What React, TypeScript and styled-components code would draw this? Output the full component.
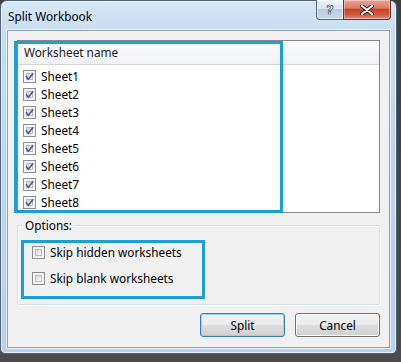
import React from "react";
import styled, { createGlobalStyle } from "styled-components";

const GlobalStyle = createGlobalStyle`
  *, *::before, *::after { box-sizing: border-box; }
  html, body { margin: 0; padding: 0; background: #4a4a4a; }
  body {
    font-family: "Noto Sans", "Open Sans", sans-serif;
    font-size: 11.8px;
    color: #000;
  }
`;

const sheets = ["Sheet1", "Sheet2", "Sheet3", "Sheet4", "Sheet5", "Sheet6", "Sheet7", "Sheet8"];

const options = ["Skip hidden worksheets", "Skip blank worksheets"];

const CheckBox = ({ checked }: { checked?: boolean }) => (
  <Box>
    <BoxFill />
    {checked && (
      <CheckMark viewBox="0 0 13 13">
        <path d="M3 6.2 L5.4 9.2 L10.2 3.2" fill="none" stroke="#4a5f8f" strokeWidth="1.7" />
      </CheckMark>
    )}
  </Box>
);

const App = () => {
  return (
    <Page>
      <GlobalStyle />
      <Window>
        <TitleBar>
          <Title>Split Workbook</Title>
          <Caption>
            <HelpButton>?</HelpButton>
            <CloseButton>
              <svg width="14" height="10" viewBox="0 0 14 10">
                <path d="M2 1 L12 9 M12 1 L2 9" stroke="#3b1a14" strokeWidth="4" strokeLinecap="round" />
                <path d="M2 1 L12 9 M12 1 L2 9" stroke="#ffffff" strokeWidth="2.2" strokeLinecap="round" />
              </svg>
            </CloseButton>
          </Caption>
        </TitleBar>
        <Client>
          <ListBox>
            <ListHeader>Worksheet name</ListHeader>
            <Rows>
              {sheets.map((s) => (
                <Row key={s}>
                  <CheckBox checked />
                  <span>{s}</span>
                </Row>
              ))}
            </Rows>
            <Highlight $left={-4} $top={0} $width={269} $height={172} />
          </ListBox>
          <Group>
            <GroupLabel>Options:</GroupLabel>
            <OptionList>
              {options.map((o) => (
                <OptionRow key={o}>
                  <CheckBox />
                  <span>{o}</span>
                </OptionRow>
              ))}
            </OptionList>
            <Highlight $left={3} $top={14} $width={184} $height={59} />
          </Group>
          <Buttons>
            <Button $default>Split</Button>
            <Button>Cancel</Button>
          </Buttons>
        </Client>
      </Window>
    </Page>
  );
};

export default App;

const Page = styled.div`
  width: 401px;
  height: 362px;
  overflow: hidden;
  background: linear-gradient(180deg, #3e3e3e 0%, #4c4c4c 100%);
`;

const Window = styled.div`
  width: 397px;
  height: 354px;
  display: flex;
  flex-direction: column;
  padding: 0 6px 5px 6px;
  border: 1px solid #52657b;
  border-radius: 7px 7px 5px 5px;
  background: linear-gradient(180deg, #d6e7f7 0%, #c6dcf1 10%, #bdd5ee 60%, #b9d2ec 100%);
  box-shadow: inset 0 0 0 1px rgba(255, 255, 255, 0.55);
`;

const TitleBar = styled.div`
  height: 29px;
  flex: none;
  display: flex;
  justify-content: space-between;
  align-items: flex-start;
`;

const Title = styled.div`
  margin: 7px 0 0 1px;
  line-height: 16px;
  font-size: 11.8px;
  color: #000;
`;

const Caption = styled.div`
  display: flex;
  margin: -1px -1px 0 0;
  height: 20px;
`;

const HelpButton = styled.div`
  width: 27px;
  height: 20px;
  display: flex;
  align-items: center;
  justify-content: center;
  border: 1px solid #55677d;
  border-top: none;
  border-right: none;
  border-radius: 0 0 0 4px;
  background: linear-gradient(180deg, #eef3f9 0%, #d9e4f0 45%, #b8cadf 50%, #c9d9ea 100%);
  box-shadow: inset 0 0 0 1px rgba(255, 255, 255, 0.5);
  font-family: "DejaVu Sans", sans-serif;
  font-weight: bold;
  font-size: 13px;
  color: #eef2f6;
  -webkit-text-stroke: 0.7px #4b5866;
  line-height: 1;
`;

const CloseButton = styled.div`
  width: 48px;
  height: 20px;
  display: flex;
  align-items: center;
  justify-content: center;
  border: 1px solid #6a2e26;
  border-top: none;
  border-radius: 0 0 4px 0;
  background: linear-gradient(180deg, #e9a897 0%, #dc7a66 42%, #c8442d 50%, #cf5a41 78%, #e59078 100%);
  box-shadow: inset 0 0 0 1px rgba(255, 255, 255, 0.35);
`;

const Client = styled.div`
  flex: 1;
  display: flex;
  flex-direction: column;
  padding: 9px;
  background: #f0f0f0;
  border: 1px solid #8ea3ba;
  box-shadow: 0 0 0 1px rgba(255, 255, 255, 0.65);
`;

const ListBox = styled.div`
  position: relative;
  height: 173px;
  flex: none;
  background: #fff;
  border: 1px solid #828790;
`;

const ListHeader = styled.div`
  height: 24px;
  line-height: 23px;
  padding-left: 6px;
  color: #222;
  background: linear-gradient(180deg, #fbfbfc 0%, #f1f2f4 100%);
  border-bottom: 1px solid #d5d5d5;
`;

const Rows = styled.div`
  padding-top: 2px;
  display: flex;
  flex-direction: column;
`;

const Row = styled.div`
  height: 18px;
  display: flex;
  align-items: center;
  gap: 5px;
  padding-left: 5px;
`;

const Box = styled.span`
  position: relative;
  width: 13px;
  height: 13px;
  flex: none;
  display: flex;
  padding: 2px;
  border: 1px solid #8e8f8f;
  background: #f4f4f4;
`;

const BoxFill = styled.span`
  flex: 1;
  border: 1px solid #b7bcc2;
  background: linear-gradient(135deg, #cfd3d8 0%, #eef0f2 70%, #f8f8f8 100%);
`;

const CheckMark = styled.svg`
  position: absolute;
  left: -1px;
  top: -1px;
  width: 13px;
  height: 13px;
`;

const Highlight = styled.div<{ $left: number; $top: number; $width: number; $height: number }>`
  position: absolute;
  left: ${(p) => p.$left}px;
  top: ${(p) => p.$top}px;
  width: ${(p) => p.$width}px;
  height: ${(p) => p.$height}px;
  border: 3px solid #1c9edb;
  pointer-events: none;
`;

const Group = styled.div`
  position: relative;
  margin-top: 12px;
  height: 80px;
  flex: none;
  border: 1px solid #d5dfe5;
  box-shadow: inset 1px 1px 0 #fff, 1px 1px 0 #fff;
  border-radius: 2px;
`;

const GroupLabel = styled.div`
  width: fit-content;
  margin: -8px 0 0 5px;
  padding: 0 2px;
  line-height: 15px;
  background: #f0f0f0;
  color: #000;
`;

const OptionList = styled.div`
  margin-top: 9px;
  display: flex;
  flex-direction: column;
  gap: 6px;
`;

const OptionRow = styled.div`
  height: 20px;
  display: flex;
  align-items: center;
  gap: 5px;
  padding-left: 14px;
`;

const Buttons = styled.div`
  margin-top: 8px;
  display: flex;
  justify-content: flex-end;
  gap: 10px;
`;

const Button = styled.div<{ $default?: boolean }>`
  width: 85px;
  height: 24px;
  display: flex;
  align-items: center;
  justify-content: center;
  border-radius: 3px;
  border: 1px solid ${(p) => (p.$default ? "#3c7fb1" : "#707070")};
  background: linear-gradient(180deg, #f2f2f2 0%, #ebebeb 48%, #dddddd 52%, #cfcfcf 100%);
  box-shadow: inset 0 0 0 1px ${(p) => (p.$default ? "#8fd3f3" : "#fcfcfc")};
  color: #000;
`;
